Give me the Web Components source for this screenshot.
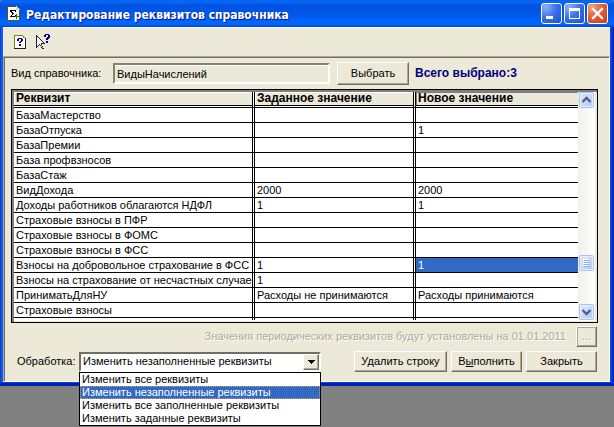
<!DOCTYPE html>
<html lang="ru">
<head>
<meta charset="utf-8">
<title>Редактирование реквизитов справочника</title>
<style>
  body { margin: 0; min-height: 100vh; background: #808080; font: 11px/13px "Liberation Sans", Arial, sans-serif; color: #000; }
</style>
</head>
<body>
<app-window caption="Редактирование реквизитов справочника">
  <tool-bar slot="tools"></tool-bar>
  <catalog-row></catalog-row>
  <props-grid></props-grid>
  <period-row></period-row>
  <action-row></action-row>
</app-window>

<script>
const define = (name, html, setup) => {
  const template = document.createElement('template');
  template.innerHTML = html;
  customElements.define(name, class extends HTMLElement {
    connectedCallback() {
      if (this.shadowRoot) return;
      this.attachShadow({ mode: 'open' }).append(template.content.cloneNode(true));
      if (setup) setup(this, this.shadowRoot);
    }
  });
};

/* Raised classic push button */
define('push-button', `
<style>
  :host { display: block; flex: none; }
  button { display: block; box-sizing: border-box; width: 100%; height: var(--h, 21px); margin: 0; padding: 0;
    font: inherit; color: inherit; text-shadow: inherit; background: #ece9d8; border: 1px solid; border-color: #fff #716f64 #716f64 #fff;
    box-shadow: inset -1px -1px #aca899; white-space: nowrap; }
  button:disabled { box-shadow: inset -1px -1px #aca899, inset 1px 1px #aca899; }
</style>
<button type="button"><slot></slot></button>`, (host, root) => {
  root.querySelector('button').disabled = host.hasAttribute('off');
});

define('app-window', `
<style>
  :host { display: block; box-sizing: border-box; padding: 0 4px 4px 3px; border-radius: 4px 4px 0 0;
    background: linear-gradient(90deg, #0831d9, #166aee 2px, #0855dd 3px, #0855dd calc(100% - 4px), #0844e0 calc(100% - 3px), #001ea0 100%);
    box-shadow: inset 0 -3px #0020b0, inset 0 -4px #0845dd; }
  header { display: flex; align-items: center; height: 27px; margin: 0 -4px 0 -3px; padding: 0 6px 0 7px; border-radius: 4px 4px 0 0;
    box-sizing: border-box; gap: 6px;
    background: linear-gradient(#0058e6, #0a6cfa 1px, #0560f0 3px, #0053e0 5px, #0055e5 12px, #005cf5 18px, #0066ff 22px, #0062f4 25px, #0140c8 27px); }
  h1 { flex: 1; margin: 0; padding-top: 2px; font: bold 12px/16px "DejaVu Sans Condensed", sans-serif; color: #fff; text-shadow: 1px 1px #0a1883; white-space: nowrap; }
  nav { display: flex; gap: 2px; }
  button { display: block; width: 21px; height: 21px; padding: 0; border: 1px solid #fff; border-radius: 3px;
    background: radial-gradient(circle at 20% 15%, #8fb0f5, #3a6fe8 50%, #1b52d8); }
  button.close { background: radial-gradient(circle at 20% 15%, #f0a080, #e25b35 50%, #cf3c12); }
  button svg { display: block; }
  main { display: block; background: #ece9d8; border-top: 1px solid #fff; }
  section { padding: 5px 11px 9px 7px; border: 1px solid; border-color: #aca899 #fff #fff #aca899; box-shadow: inset 1px 1px #716f64; }
</style>
<header>
  <svg width="13" height="15" viewBox="0 0 13 15" aria-hidden="true" shape-rendering="crispEdges">
    <path d="M.5.5h9l3 3v11H.5z" fill="#fff" stroke="#55551e"/>
    <path d="M9 0v4h4z" fill="#d8d8b8"/>
    <path d="M3 4h6v2H8V5H5v1h1v1h1v1H6v1H5v1h3V9h1v2H3v-1h1V9h1V7H4V6H3z" fill="#000"/>
    <path d="M9 8h1v2h2v1h-2v2H9v-2H8v-1h1z" fill="#080"/>
  </svg>
  <h1></h1>
  <nav>
    <button type="button" aria-label="Свернуть"><svg width="19" height="19" aria-hidden="true"><path d="M4 12h7v3H4z" fill="#fff"/></svg></button>
    <button type="button" aria-label="Развернуть"><svg width="19" height="19" aria-hidden="true" shape-rendering="crispEdges"><path d="M4 4h11v11H4zM5 7v7h9V7z" fill="#fff" fill-rule="evenodd"/></svg></button>
    <button type="button" class="close" aria-label="Закрыть окно"><svg width="19" height="19" aria-hidden="true"><path d="M5 5l9 9M14 5l-9 9" stroke="#fff" stroke-width="2.3" stroke-linecap="square"/></svg></button>
  </nav>
</header>
<main>
  <slot name="tools"></slot>
  <section><slot></slot></section>
</main>`, (host, root) => {
  root.querySelector('h1').textContent = host.getAttribute('caption');
});

define('tool-bar', `
<style>
  :host { display: flex; align-items: center; gap: 10px; height: 28px; padding: 0 11px; }
  button { display: block; padding: 0; border: 0; background: none; }
  svg { display: block; }
</style>
<button type="button" aria-label="Описание"><svg width="12" height="14" viewBox="0 0 12 14" shape-rendering="crispEdges" aria-hidden="true">
  <path d="M0 0h9v1h1v1h1v1h1v11H0z" fill="#222"/>
  <path d="M0 0h9v1H1v12H0z" fill="#808000"/>
  <path d="M1 1h8v2h2v10H1z" fill="#fff"/>
  <path d="M9 1h1v1h1v1H9z" fill="#808000"/>
  <path d="M4 3h4v1h1v2H8v1H7v1H5V7h1V6h1V4H5v2H3V4h1zM5 9h2v2H5z" fill="#000080"/>
</svg></button>
<button type="button" aria-label="Контекстная справка"><svg width="15" height="16" viewBox="0 0 15 16" shape-rendering="crispEdges" aria-hidden="true">
  <path d="M0 1h1v1h1v1h1v1h1v1h1v1h1v1h1v1h1v1h1v1H6v2h1v2h1v1H6v-1H5v-2H4v-1H3v1H2v1H1v1H0z" fill="#222"/>
  <path d="M1 3h1v1h1v1h1v1h1v1h1v1h1v1H5v2H4v-1H3v1H2v1H1z" fill="#f4f2e6"/>
  <path d="M5 11h1v2h1v1H6v-1H5z" fill="#aaa"/>
  <path d="M9 0h4v1h1v3h-1v1h-1v1h-2V4h1V3h1V1h-2v2H8V1h1zM10 7h2v2h-2z" fill="#000080"/>
</svg></button>`);

define('catalog-row', `
<style>
  :host { display: flex; align-items: center; }
  label { width: 102px; }
  input { flex: 0 1 217px; min-width: 0; box-sizing: border-box; height: 21px; margin: 0 7px 0 0; padding: 0 2px; font: inherit; color: inherit;
    background: #ece9d8; border: 2px solid; border-color: #85836f #fff #fff #85836f; border-radius: 0; box-shadow: inset 0 1px #fff; outline: 0; }
  push-button { width: 72px; --h: 23px; }
  strong { margin-left: 6px; font-size: 12px; color: #000080; white-space: nowrap; }
</style>
<label for="kind">Вид справочника:</label>
<input id="kind" type="text" readonly value="ВидыНачислений">
<push-button>Выбрать</push-button>
<strong>Всего выбрано:3</strong>`);

const rows = [
  ['БазаМастерство'], ['БазаОтпуска', '', '1'], ['БазаПремии'], ['База профвзносов'], ['БазаСтаж'],
  ['ВидДохода', '2000', '2000'], ['Доходы работников облагаются НДФЛ', '1', '1'],
  ['Страховые взносы в ПФР'], ['Страховые взносы в ФОМС'], ['Страховые взносы в ФСС'],
  ['Взносы на добровольное страхование в ФСС', '1', '1'],
  ['Взносы на страхование от несчастных случае', '1'],
  ['ПриниматьДляНУ', 'Расходы не принимаются', 'Расходы принимаются'], ['Страховые взносы']
];

define('props-grid', `
<style>
  :host { display: flex; margin-top: 4px; background: #fff; border: 1px solid #000;
    box-shadow: inset 2px 2px #808080, inset -2px -1px #ece9d8; padding: 2px; }
  .view { flex: 1; min-width: 0; padding-bottom: 2px;
    background: linear-gradient(#000, #000) 238px 0 / 1px 100% no-repeat, linear-gradient(#000, #000) 240px 0 / 1px 100% no-repeat,
      linear-gradient(#000, #000) 399px 0 / 1px 100% no-repeat, linear-gradient(#000, #000) 401px 0 / 1px 100% no-repeat; }
  table { width: 100%; border-spacing: 0; table-layout: fixed; }
  col.name { width: 241px; } col.old { width: 161px; }
  th, td { padding: 0 0 0 2px; height: 14px; line-height: 14px; text-align: left; white-space: nowrap; overflow: hidden; border-bottom: 1px solid #000; border-right: 3px double #000; }
  th { height: 13px; line-height: 13px; font-size: 12px; background: #ece9d8; background-clip: padding-box; border-bottom: 3px double #000; box-shadow: inset 1px 1px #fff; }
  th:last-child, td:last-child { border-right: 0; }
  th:last-child { box-shadow: inset 1px 1px #808080; }
  td[aria-selected] { background: #316ac5; background-clip: padding-box; color: #fff; }
</style>
<div class="view">
  <table>
    <colgroup><col class="name"><col class="old"><col></colgroup>
    <thead><tr><th>Реквизит</th><th>Заданное значение</th><th>Новое значение</th></tr></thead>
    <tbody></tbody>
  </table>
</div>
<scroll-strip></scroll-strip>`, (host, root) => {
  const body = root.querySelector('tbody');
  rows.forEach((row, r) => {
    const tr = body.insertRow();
    for (let c = 0; c < 3; c++) {
      const td = tr.insertCell();
      td.textContent = row[c] || '';
      if (r === 10 && c === 2) td.setAttribute('aria-selected', 'true');
    }
  });
});

define('scroll-strip', `
<style>
  :host { display: flex; flex-direction: column; width: 17px; background: linear-gradient(90deg, #f1f0e9, #fff); }
  button, i { display: block; flex: none; box-sizing: border-box; width: 15px; height: 16px; margin: 0 1px; padding: 0;
    background: linear-gradient(135deg, #dfe9ff, #b0c8fb); border: 1px solid #a9c0f2; border-radius: 2px; box-shadow: inset 0 0 0 1px #e8f0ff; }
  .a { flex: 146; } .b { flex: 33; }
  svg { display: block; margin: 0 auto; }
</style>
<button type="button" aria-label="Вверх"><svg width="13" height="14"><path d="M2.5 9l4-4 4 4" fill="none" stroke="#4d6185" stroke-width="2.4"/></svg></button>
<span class="a"></span>
<i><svg width="13" height="14" shape-rendering="crispEdges"><path d="M3 3.5h6M3 5.5h6M3 7.5h6M3 9.5h6" stroke="#fff"/><path d="M4 4.5h6M4 6.5h6M4 8.5h6M4 10.5h6" stroke="#8cabf0"/></svg></i>
<span class="b"></span>
<button type="button" aria-label="Вниз"><svg width="13" height="14"><path d="M2.5 5l4 4 4-4" fill="none" stroke="#4d6185" stroke-width="2.4"/></svg></button>`);

define('period-row', `
<style>
  :host { display: flex; align-items: center; justify-content: flex-end; gap: 10px; margin: 3px 1px 0 0; color: #aca899; text-shadow: 1px 1px #fff; }
  push-button { width: 21px; }
</style>
<span>Значения периодических реквизитов будут установлены на 01.01.2011</span>
<push-button off>...</push-button>`);

define('action-row', `
<style>
  :host { display: flex; align-items: center; margin: 4px 1px 0 6px; }
  label { width: 62px; }
  combo-box { flex: 0 1 242px; min-width: 0; }
  .buttons { display: flex; flex: 1; justify-content: flex-end; gap: 4px; }
  .wide { width: 93px; } .mid { width: 71px; }
</style>
<label id="mode">Обработка:</label>
<combo-box></combo-box>
<div class="buttons">
  <push-button class="wide">Удалить строку</push-button>
  <push-button class="mid">В<u>ы</u>полнить</push-button>
  <push-button class="mid">Закрыть</push-button>
</div>`, (host, root) => {
  root.querySelector('label').addEventListener('click', () => root.querySelector('combo-box').shadowRoot.querySelector('select').focus());
});

define('combo-box', `
<style>
  :host { display: block; position: relative; }
  .field { display: flex; box-sizing: border-box; height: 20px; background: #fff; border: 2px solid; border-color: #716f64 #fff #fff #716f64; }
  select { flex: 1; min-width: 0; appearance: none; margin: 0; padding: 0 2px; font: inherit; color: inherit; background: none; border: 0; border-radius: 0; outline: 0; }
  .arrow { display: flex; align-items: center; justify-content: center; box-sizing: border-box; width: 16px; pointer-events: none;
    background: #ece9d8; border: 1px solid; border-color: #fff #716f64 #716f64 #fff; box-shadow: inset -1px -1px #aca899; }
  ul { position: absolute; z-index: 1; top: 100%; left: 0; right: 0; margin: 0; padding: 0; list-style: none; background: #fff; border: 1px solid #000; }
  li { height: 13px; padding: 0 2px; white-space: nowrap; }
  li[aria-selected] { color: #fff; background: #316ac5; outline: 1px dotted #e0a040; outline-offset: -1px; }
</style>
<div class="field">
  <select aria-label="Обработка">
    <option>Изменить все реквизиты</option>
    <option selected>Изменить незаполненные реквизиты</option>
    <option>Изменить все заполненные реквизиты</option>
    <option>Изменить заданные реквизиты</option>
  </select>
  <span class="arrow"><svg width="7" height="4" shape-rendering="crispEdges"><path d="M0 0h7v1H6v1H5v1H4v1H3V3H2V2H1V1H0z"/></svg></span>
</div>
<ul role="listbox" aria-label="Обработка"></ul>`, (host, root) => {
  const list = root.querySelector('ul');
  for (const option of root.querySelectorAll('option')) {
    const li = document.createElement('li');
    li.setAttribute('role', 'option');
    li.textContent = option.textContent;
    if (option.selected) li.setAttribute('aria-selected', 'true');
    list.append(li);
  }
});
</script>
</body>
</html>
